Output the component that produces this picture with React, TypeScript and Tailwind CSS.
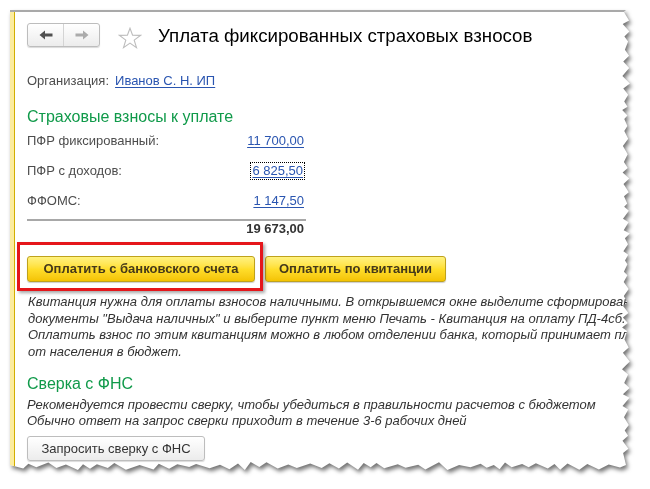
import React from "react";

const W = 622;
const H = 461;

function buildClip(): string {
  let s = 11;
  const rand = () => {
    s = (s * 9301 + 49297) % 233280;
    return s / 233280;
  };
  const pts: [number, number][] = [[0, 0], [W - 6, 0]];
  let y = 2;
  let deep = true;
  while (y < H - 12) {
    const x = deep ? W - 10 + rand() * 3 : W - 2 - rand() * 3;
    pts.push([x, y]);
    y += 3 + rand() * 6;
    deep = !deep;
  }
  pts.push([W - 6, H - 6]);
  let x = W - 12;
  deep = false;
  while (x > 4) {
    const yy = deep ? H - 9 + rand() * 3 : H - 1 - rand() * 3;
    pts.push([x, yy]);
    x -= 5 + rand() * 9;
    deep = !deep;
  }
  pts.push([0, H - 6]);
  return `polygon(${pts.map(([a, b]) => `${a.toFixed(1)}px ${b.toFixed(1)}px`).join(",")})`;
}

const clip = buildClip();

function Star() {
  return (
    <svg width="24" height="22" viewBox="0 0 24 22">
      <path
        d="M12 1.2 L14.6 8.3 L22.4 8.4 L16.2 13.1 L18.5 20.6 L12 16.1 L5.5 20.6 L7.8 13.1 L1.6 8.4 L9.4 8.3 Z"
        fill="none"
        stroke="#bdbdbd"
        strokeWidth="1.1"
        strokeLinejoin="miter"
      />
    </svg>
  );
}

function Arrow({ dir, color }: { dir: "l" | "r"; color: string }) {
  return (
    <svg width="14" height="10" viewBox="0 0 14 10">
      {dir === "l" ? (
        <path d="M0.5 5 L6 0.5 L6 3.5 L13.5 3.5 L13.5 6.5 L6 6.5 L6 9.5 Z" fill={color} />
      ) : (
        <path d="M13.5 5 L8 0.5 L8 3.5 L0.5 3.5 L0.5 6.5 L8 6.5 L8 9.5 Z" fill={color} />
      )}
    </svg>
  );
}

function Row({ label, value, focus }: { label: string; value: string; focus?: boolean }) {
  return (
    <div className="flex h-[30px] items-center justify-between">
      <span className="text-[13px] text-[#4d4d4d]">{label}</span>
      <span
        className={
          focus
            ? "text-[13px] text-[#2a55b0] underline underline-offset-2 outline-1 outline-dotted outline-black px-[1px] leading-[16px]"
            : "text-[13px] text-[#2a55b0] underline underline-offset-2 leading-[16px]"
        }
      >
        {value}
      </span>
    </div>
  );
}

export default function App() {
  return (
    <div className="w-[650px] h-[489px] bg-white pt-[10px] pl-[10px] font-['Liberation_Sans',Arial,sans-serif]">
      <div className="w-[622px] h-[461px] drop-shadow-[2px_3px_2px_rgba(0,0,0,0.55)]">
        <div
          style={{ clipPath: clip }}
          className="w-full h-full bg-white border-t-2 border-[#a9a9a9] flex"
        >
          <div className="w-[4px] bg-[#fcec9f]" />
          <div className="w-[1px] bg-[#d2ae00]" />
          <div className="flex-1 pl-[12px] overflow-hidden">
            {/* header */}
            <div className="flex items-center mt-[11px] h-[24px]">
              <div className="flex h-[24px] w-[73px] rounded-[3px] border border-[#bdbdbd] bg-gradient-to-b from-white to-[#ececec] shadow-[0_1px_1px_rgba(0,0,0,0.15)]">
                <div className="flex w-[36px] items-center justify-center border-r border-[#d4d4d4]">
                  <Arrow dir="l" color="#505050" />
                </div>
                <div className="flex flex-1 items-center justify-center">
                  <Arrow dir="r" color="#ababab" />
                </div>
              </div>
              <div className="ml-[18px] mt-[5px] flex">
                <Star />
              </div>
              <div className="ml-[16px] mt-[3px] text-[18.7px] text-black leading-none">
                Уплата фиксированных страховых взносов
              </div>
            </div>

            {/* organization */}
            <div className="mt-[26px] flex h-[16px] items-center text-[13px]">
              <span className="text-[#4d4d4d]">Организация:</span>
              <span className="ml-[6px] text-[#2a55b0] underline underline-offset-2">Иванов С. Н. ИП</span>
            </div>

            {/* heading */}
            <div className="mt-[18px] text-[16px] leading-[20px] text-[#109a4a]">
              Страховые взносы к уплате
            </div>

            <div className="w-[277px] mt-[-1px]">
              <Row label="ПФР фиксированный:" value="11 700,00" />
              <Row label="ПФР с доходов:" value="6 825,50" focus />
              <Row label="ФФОМС:" value="1 147,50" />
              <div className="mt-[3px] h-[2px] w-[279px] bg-[#a8a8a8]" />
              <div className="flex h-[16px] items-center justify-end text-[13px] font-bold text-[#333]">
                19 673,00
              </div>
            </div>

            {/* buttons */}
            <div className="relative mt-[19px] flex gap-[10px]">
              <div className="pointer-events-none absolute left-[-10px] top-[-14px] h-[49px] w-[246px] border-[3px] border-[#e5161b] shadow-[2px_2px_3px_rgba(0,0,0,0.35)]" />
              <button className="h-[26px] w-[228px] rounded-[3px] border border-[#bfa21c] bg-gradient-to-b from-[#fff27e] via-[#ffde2a] to-[#f4c300] text-[13px] font-bold text-[#45391a] shadow-[0_1px_1px_rgba(0,0,0,0.2)]">
                Оплатить с банковского счета
              </button>
              <button className="h-[26px] w-[181px] rounded-[3px] border border-[#bfa21c] bg-gradient-to-b from-[#fff27e] via-[#ffde2a] to-[#f4c300] text-[13px] font-bold text-[#45391a] shadow-[0_1px_1px_rgba(0,0,0,0.2)]">
                Оплатить по квитанции
              </button>
            </div>

            <div className="mt-[12px] pl-[1px] text-[13px] italic leading-[16.7px] text-[#333] whitespace-nowrap">
              <div>Квитанция нужна для оплаты взносов наличными. В открывшемся окне выделите сформированные</div>
              <div>документы "Выдача наличных" и выберите пункт меню Печать - Квитанция на оплату ПД-4сб.</div>
              <div>Оплатить взнос по этим квитанциям можно в любом отделении банка, который принимает платежи</div>
              <div>от населения в бюджет.</div>
            </div>

            <div className="mt-[13px] text-[16px] leading-[20px] text-[#109a4a]">Сверка с ФНС</div>
            <div className="mt-[3px] text-[13px] italic leading-[16px] text-[#333] whitespace-nowrap">
              <div>Рекомендуется провести сверку, чтобы убедиться в правильности расчетов с бюджетом</div>
              <div>Обычно ответ на запрос сверки приходит в течение 3-6 рабочих дней</div>
            </div>
            <button className="mt-[7px] h-[25px] w-[178px] rounded-[3px] border border-[#bdbdbd] bg-gradient-to-b from-white to-[#ececec] text-[13px] text-[#333] shadow-[0_1px_1px_rgba(0,0,0,0.15)]">
              Запросить сверку с ФНС
            </button>
          </div>
        </div>
      </div>
    </div>
  );
}
